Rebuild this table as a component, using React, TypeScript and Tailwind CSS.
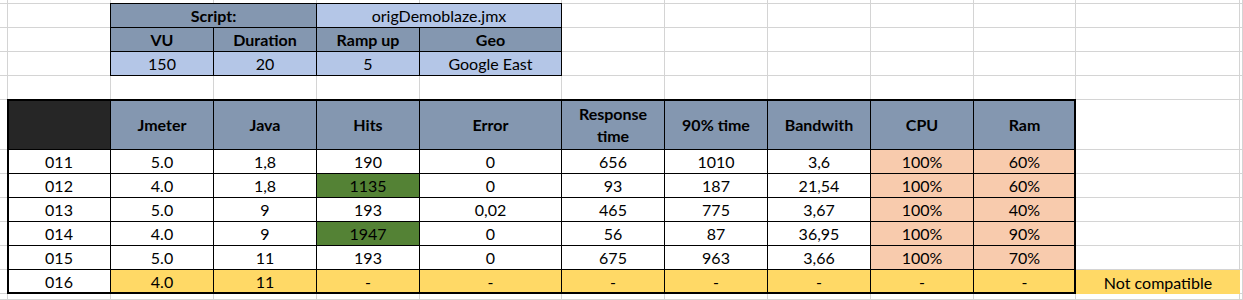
import React from "react";

const COL = ["", "col-start-1", "col-start-2", "col-start-3", "col-start-4", "col-start-5", "col-start-6", "col-start-7", "col-start-8", "col-start-9", "col-start-10", "col-start-11", "col-start-12", "col-start-13"];
const ROW = ["", "row-start-1", "row-start-2", "row-start-3", "row-start-4", "row-start-5", "row-start-6", "row-start-7", "row-start-8", "row-start-9", "row-start-10", "row-start-11", "row-start-12", "row-start-13"];

const HEAD = "bg-[#8497b0]";
const LIGHT = "bg-[#b4c6e7]";
const DARK = "bg-[#262626]";
const GREEN = "bg-[#548235]";
const PEACH = "bg-[#f8cbad]";
const YELLOW = "bg-[#ffd966]";
const WHITE = "bg-white";

type Cell = { r: number; c: number; text?: React.ReactNode; bg: string; bold?: boolean; wide?: boolean };

const cells: Cell[] = [];

// parameters block
cells.push({ r: 2, c: 3, text: "Script:", bg: HEAD, bold: true, wide: true });
cells.push({ r: 2, c: 5, text: "origDemoblaze.jmx", bg: LIGHT, wide: true });
["VU", "Duration", "Ramp up", "Geo"].forEach((t, i) => cells.push({ r: 3, c: 3 + i, text: t, bg: HEAD, bold: true }));
["150", "20", "5", "Google East"].forEach((t, i) => cells.push({ r: 4, c: 3 + i, text: t, bg: LIGHT }));

// results header
cells.push({ r: 6, c: 2, bg: DARK });
const headers: React.ReactNode[] = ["Jmeter", "Java", "Hits", "Error", <>Response<br />time</>, "90% time", "Bandwith", "CPU", "Ram"];
headers.forEach((t, i) => cells.push({ r: 6, c: 3 + i, text: t, bg: HEAD, bold: true }));

const results = [
  ["011", "5.0", "1,8", "190", "0", "656", "1010", "3,6", "100%", "60%"],
  ["012", "4.0", "1,8", "1135", "0", "93", "187", "21,54", "100%", "60%"],
  ["013", "5.0", "9", "193", "0,02", "465", "775", "3,67", "100%", "40%"],
  ["014", "4.0", "9", "1947", "0", "56", "87", "36,95", "100%", "90%"],
  ["015", "5.0", "11", "193", "0", "675", "963", "3,66", "100%", "70%"],
  ["016", "4.0", "11", "-", "-", "-", "-", "-", "-", "-"],
];

results.forEach((row, ri) => {
  const broken = row[0] === "016";
  row.forEach((v, ci) => {
    let bg = WHITE;
    if (broken && ci > 0) bg = YELLOW;
    else if (ci === 3 && Number(v) > 1000) bg = GREEN;
    else if (ci >= 8) bg = PEACH;
    cells.push({ r: 7 + ri, c: 2 + ci, text: v, bg });
  });
});

export default function App() {
  const grid = [];
  for (let r = 1; r <= 13; r++) {
    for (let c = 1; c <= 13; c++) {
      grid.push(<div key={`g${r}-${c}`} className={`${ROW[r]} ${COL[c]} border-r border-b border-[#d4d4d4]`} />);
    }
  }

  return (
    <div className="grid h-[300px] w-full overflow-hidden bg-white font-['Lato',sans-serif] text-[16px] leading-[20px] text-black grid-cols-[8px_103px_103px_103px_103px_142px_103px_103px_103px_103px_102px_164px_1fr] grid-rows-[4px_24px_24px_24px_24px_50px_24px_24px_24px_24px_24px_24px_1fr]">
      {grid}
      {cells.map((cell) => (
        <div
          key={`c${cell.r}-${cell.c}`}
          className={`${ROW[cell.r]} ${COL[cell.c]} ${cell.wide ? "col-span-2" : ""} ${cell.bg} ${cell.bold ? "font-bold" : ""} -ml-px -mt-px flex items-center justify-center border border-black pt-px text-center leading-[22px]`}
        >
          <span>{cell.text}</span>
        </div>
      ))}
      <div className={`${ROW[12]} ${COL[12]} ${YELLOW} flex items-center justify-center pt-px`}>Not compatible</div>
      <div className="pointer-events-none col-start-2 col-end-12 row-start-6 row-end-13 -ml-px -mt-px border-2 border-black" />
    </div>
  );
}
